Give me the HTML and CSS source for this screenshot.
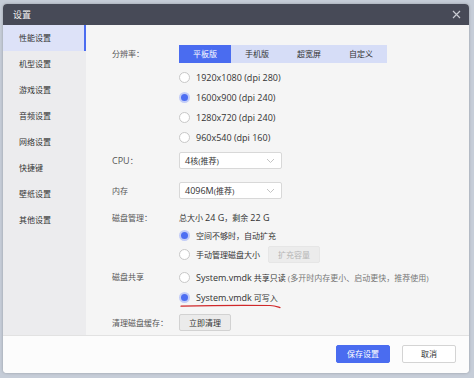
FILE: index.html
```html
<!DOCTYPE html>
<html lang="zh-CN">
<head>
  <meta charset="UTF-8" />
  <title>设置</title>
  <link rel="stylesheet" href="styles.css">
</head>
<body>
  <div class="dialog">
    <div class="titlebar">
      <span class="title">设置</span>
      <svg class="close" width="9" height="9" viewBox="0 0 9 9"><path d="M1 1L8 8M8 1L1 8" stroke="#c9cbd2" stroke-width="1.2"/></svg>
    </div>
    <div class="body">
      <ul class="sidebar">
        <li class="active">性能设置</li>
        <li>机型设置</li>
        <li>游戏设置</li>
        <li>音频设置</li>
        <li>网络设置</li>
        <li>快捷键</li>
        <li>壁纸设置</li>
        <li>其他设置</li>
      </ul>
      <div class="main">
        <div class="row row-res">
          <span class="label">分辨率：</span>
          <div class="tabs">
            <span class="tab on">平板版</span>
            <span class="tab">手机版</span>
            <span class="tab">超宽屏</span>
            <span class="tab">自定义</span>
          </div>
        </div>
        <div class="row">
          <span class="label"></span>
          <div class="stack">
            <div class="radio-row en"><i class="radio"></i>1920x1080 (dpi 280)</div>
            <div class="radio-row en"><i class="radio checked"></i>1600x900 (dpi 240)</div>
            <div class="radio-row en"><i class="radio"></i>1280x720 (dpi 240)</div>
            <div class="radio-row en"><i class="radio"></i>960x540 (dpi 160)</div>
          </div>
        </div>
        <div class="row row-cpu">
          <span class="label"><span class="en">CPU</span>：</span>
          <div class="select"><span><span class="en">4</span>核(推荐)</span><svg width="9" height="6" viewBox="0 0 9 6"><path d="M1 1L4.5 4.5L8 1" fill="none" stroke="#c4c4c4" stroke-width="1"/></svg></div>
        </div>
        <div class="row row-mem">
          <span class="label">内存</span>
          <div class="select"><span><span class="en">4096M</span>(推荐)</span><svg width="9" height="6" viewBox="0 0 9 6"><path d="M1 1L4.5 4.5L8 1" fill="none" stroke="#c4c4c4" stroke-width="1"/></svg></div>
        </div>
        <div class="row row-disk">
          <span class="label">磁盘管理：</span>
          <div class="stack">
            <div class="info">总大小 <span class="en">24 G</span>，剩余 <span class="en">22 G</span></div>
            <div class="radio-row short"><i class="radio checked"></i>空间不够时，自动扩充</div>
            <div class="radio-row"><i class="radio"></i>手动管理磁盘大小<span class="btn disabled">扩充容量</span></div>
          </div>
        </div>
        <div class="row row-share">
          <span class="label">磁盘共享</span>
          <div class="stack">
            <div class="radio-row"><i class="radio"></i><span class="en">System.vmdk</span>&nbsp;共享只读<span class="muted">(多开时内存更小、启动更快，推荐使用)</span></div>
            <div class="radio-row marked"><i class="radio checked"></i><span class="en">System.vmdk</span>&nbsp;可写入
              <svg class="scribble" width="104" height="6" viewBox="0 0 104 6"><path d="M1 3.2C30 2.4 70 2.2 90 2.5C95 2.6 97 3.6 100 4.6" fill="none" stroke="#d0282a" stroke-width="1.2" stroke-linecap="round"/></svg>
            </div>
          </div>
        </div>
        <div class="row row-clean">
          <span class="label">清理磁盘缓存：</span>
          <span class="btn">立即清理</span>
        </div>
      </div>
    </div>
    <div class="footer">
      <span class="btn primary">保存设置</span>
      <span class="btn plain">取消</span>
    </div>
  </div>
</body>
</html>
```

FILE: styles.css
```css
body {
  margin: 0;
  padding: 4px 5px 5px 3px;
  background: #c6cdd8;
  font-family: "Open Sans", "Noto Sans CJK SC", sans-serif;
  font-size: 8px;
  color: #333;
}
/* latin runs read a bit larger than the CJK glyphs */
.en {
  font-size: 9px;
}
.dialog {
  width: 466px;
  height: 369px;
  border-radius: 4px;
  overflow: hidden;
  background: #f5f5f5;
  box-shadow: 0 0 3px rgba(0, 0, 0, 0.25);
  display: flex;
  flex-direction: column;
}
.titlebar {
  height: 21px;
  flex: none;
  background: #474a57;
  display: flex;
  align-items: center;
  justify-content: space-between;
  padding: 0 8px 0 10px;
}
.title {
  color: #f2f2f2;
  font-size: 9px;
}
.body {
  flex: 1;
  display: flex;
  min-height: 0;
}
.sidebar {
  list-style: none;
  margin: 0;
  padding: 0;
  width: 83px;
  flex: none;
  background: #ececee;
}
.sidebar li {
  height: 26px;
  line-height: 26px;
  padding-left: 16px;
  color: #333;
}
.sidebar li.active {
  background: #dde2f8;
  box-shadow: inset -2px 0 0 #4b6cf0;
}
.main {
  flex: 1;
  padding: 20px 0 0 26px;
  display: flex;
  flex-direction: column;
}
.row {
  display: flex;
  align-items: flex-start;
}
.label {
  width: 67px;
  flex: none;
  color: #555;
  line-height: 18px;
}
.tabs {
  display: flex;
  background: #d6ddf7;
}
.tab {
  width: 52px;
  height: 18px;
  line-height: 18px;
  text-align: center;
  color: #333;
}
.tab.on {
  background: #4a6cf0;
  color: #fff;
}
.stack {
  display: flex;
  flex-direction: column;
}
.row-res + .row {
  margin-top: 4px;
}
.radio-row {
  height: 20px;
  display: flex;
  align-items: center;
  white-space: nowrap;
  position: relative;
}
.radio-row.short {
  height: 18px;
}
.radio {
  width: 11px;
  height: 11px;
  border: 1px solid #c8c8c8;
  border-radius: 50%;
  background: #fff;
  margin: 0 6px 0 0;
  box-sizing: border-box;
  flex: none;
}
.radio.checked {
  border: 2px solid #c3cdf7;
  background: #4d6ef2;
}
.select {
  width: 103px;
  height: 17px;
  box-sizing: border-box;
  border: 1px solid #d8d8d8;
  border-radius: 2px;
  background: #fff;
  display: flex;
  align-items: center;
  justify-content: space-between;
  padding: 0 6px 0 5px;
}
.row-cpu {
  margin-top: 5px;
}
.row-cpu .label,
.row-mem .label {
  line-height: 17px;
}
.row-mem {
  margin-top: 13px;
}
.row-disk {
  margin-top: 11px;
}
.row-disk .label {
  line-height: 16px;
}
.info {
  height: 16px;
  line-height: 16px;
}
.row-share {
  margin-top: 3px;
}
.row-share .label {
  line-height: 20px;
}
.muted {
  color: #777;
  margin-left: 2px;
}
.scribble {
  position: absolute;
  left: 1px;
  top: 16px;
}
.row-clean {
  margin-top: 7px;
}
.row-clean .label {
  line-height: 17px;
}
.btn {
  display: inline-block;
  width: 52px;
  height: 17px;
  line-height: 15px;
  box-sizing: border-box;
  text-align: center;
  border: 1px solid #d2d2d2;
  border-radius: 2px;
  background: #ebebeb;
  color: #333;
}
.btn.disabled {
  margin-left: 8px;
  color: #b5b5b5;
  border-color: #e6e6e6;
  background: #ececec;
}
.footer {
  height: 38px;
  flex: none;
  box-sizing: border-box;
  border-top: 1px solid #e2e2e2;
  background: #fcfcfc;
  display: flex;
  align-items: center;
  justify-content: flex-end;
  gap: 12px;
  padding: 0 13px 2px 0;
}
.footer .btn {
  width: 54px;
  height: 18px;
  line-height: 16px;
}
.btn.primary {
  background: #4a6cf0;
  border-color: #4a6cf0;
  color: #fff;
}
.btn.plain {
  background: #fff;
  border-color: #d4d4d4;
}
```
